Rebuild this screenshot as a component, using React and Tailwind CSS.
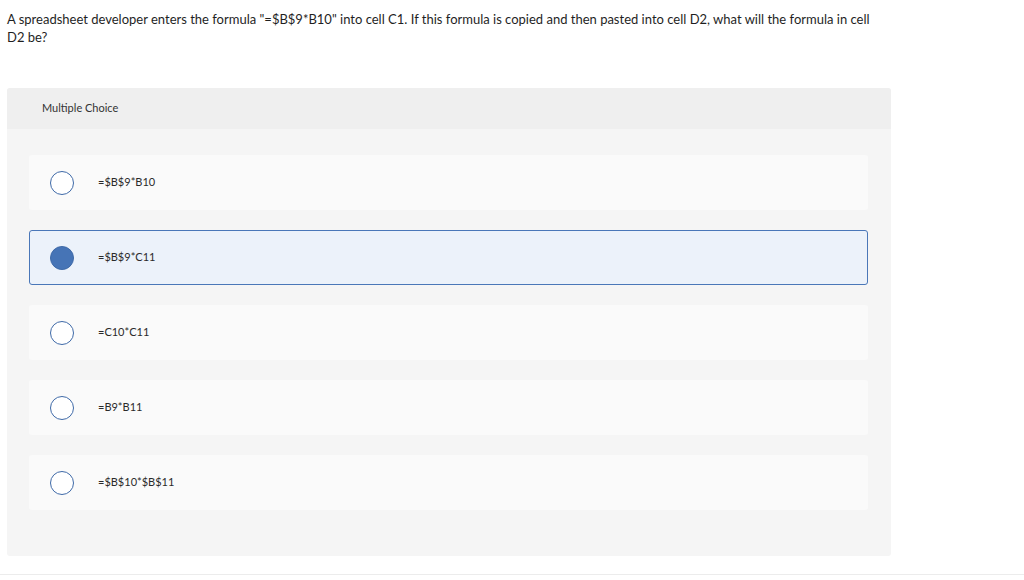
import { useState } from 'react';

const CHOICES = ['=$B$9*B10', '=$B$9*C11', '=C10*C11', '=B9*B11', '=$B$10*$B$11'];

function Radio({ checked }) {
  return (
    <span
      className={`w-6 h-6 rounded-full border border-[#3f6aa8] shrink-0 ${
        checked ? 'bg-[#4674b6]' : 'bg-white'
      }`}
    />
  );
}

export default function App() {
  const [selected, setSelected] = useState(1);

  return (
    <div className="min-h-[580px] bg-white font-['Lato',sans-serif] text-[#1f1f1f]">
      <p className="px-[7px] pt-[10px] text-[13px] leading-[18px] max-w-[880px]">
        A spreadsheet developer enters the formula "=$B$9*B10" into cell C1. If this formula is copied and then pasted
        into cell D2, what will the formula in cell D2 be?
      </p>

      <div className="ml-[7px] mt-[42px] w-[884px] rounded-[3px] bg-[#f5f5f5] pb-[46px]">
        <div className="h-[41px] flex items-center px-[35px] bg-[#efefef] rounded-t-[3px] text-[11px] text-[#333]">
          Multiple Choice
        </div>

        <div className="flex flex-col gap-5 pl-[22px] pr-[23px] pt-[26px]">
          {CHOICES.map((choice, i) => (
            <button
              key={choice}
              onClick={() => setSelected(i)}
              className={`h-[55px] flex items-center gap-6 pl-[20px] rounded-[3px] text-left text-[11px] text-[#2a2a2a] border ${
                selected === i ? 'bg-[#ecf2fa] border-[#4a77b8]' : 'bg-[#fafafa] border-transparent'
              }`}
            >
              <Radio checked={selected === i} />
              <span>{choice}</span>
            </button>
          ))}
        </div>
      </div>

      <div className="mt-[18px] border-t border-[#ececec]" />
    </div>
  );
}
